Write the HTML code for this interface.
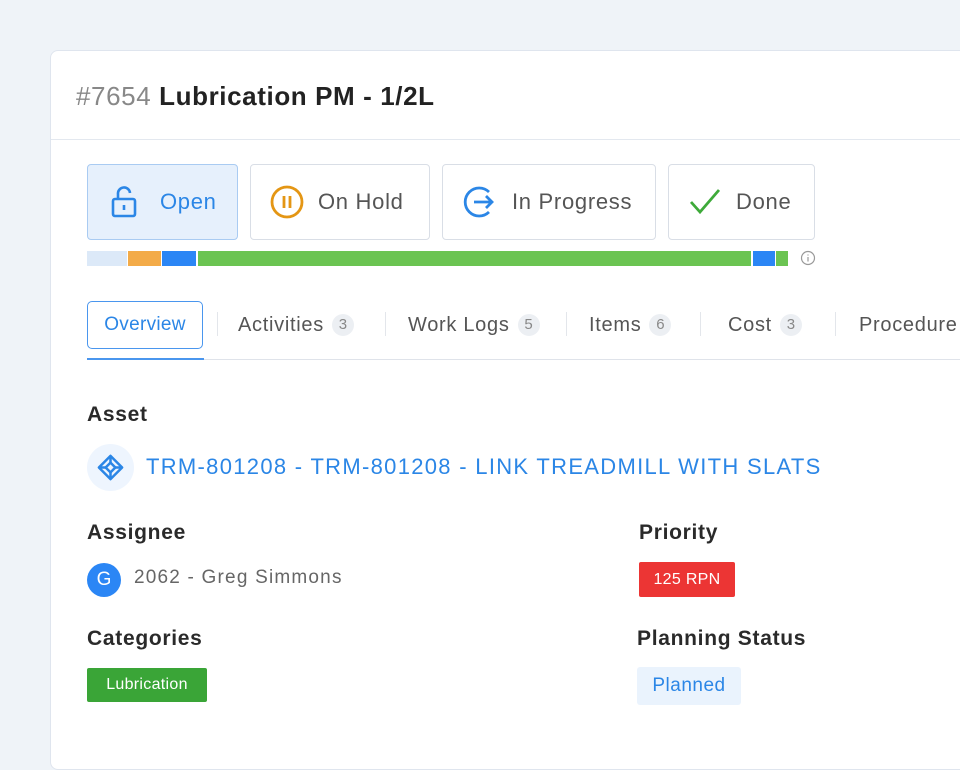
<!DOCTYPE html>
<html><head><meta charset="utf-8"><style>
*{box-sizing:border-box;margin:0;padding:0}
body{width:960px;height:720px;overflow:hidden;background:#eff3f8;font-family:"Liberation Sans",sans-serif;position:relative;letter-spacing:0.7px}
.card{position:absolute;left:50px;top:50px;width:960px;height:720px;background:#fff;border:1px solid #dfe5ee;border-radius:8px}
.hdr{height:89px;border-bottom:1px solid #e3e8ef;padding:30px 0 0 25px;font-size:26px;font-weight:bold;color:#222;letter-spacing:0.6px}
.hdr span{color:#888;font-weight:normal}
.btn{position:absolute;top:113px;height:76px;border:1px solid #d9dee6;border-radius:4px;background:#fff;display:flex;align-items:center;font-size:22px;color:#555}
.btn svg{margin:0 14px 0 19px}
.bar{position:absolute;top:200px;height:15px}
.tab{position:absolute;top:250px;height:48px;font-size:20px;color:#555;display:flex;align-items:center}
.cnt{display:inline-block;width:22px;height:22px;border-radius:11px;background:#eceff3;color:#888;font-size:15px;text-align:center;line-height:22px;margin-left:8px;letter-spacing:0}
.sep{position:absolute;top:261px;width:1px;height:24px;background:#e3e6eb}
.lbl{position:absolute;font-size:21px;font-weight:bold;color:#2a2a2a}
</style></head><body>
<div class="card">
<div class="hdr"><span>#7654</span> Lubrication PM - 1/2L</div>
<div class="btn" style="left:36px;width:151px;background:#e6f0fc;border-color:#a9cbf2;color:#2b86e6">
<svg style="margin:0 20px 0 22px" width="30" height="34" viewBox="0 0 30 34" fill="none" stroke="#2b86e6" stroke-width="2.6"><path d="M8 14V9a6 6 0 0 1 12-1"/><rect x="3" y="14" width="22" height="17" rx="2"/><path d="M14 20v5"/></svg>Open</div>
<div class="btn" style="left:199px;width:180px">
<svg width="34" height="34" viewBox="0 0 34 34" fill="none" stroke="#e49614" stroke-width="2.8"><circle cx="17" cy="17" r="15"/><path d="M14 11v12M20 11v12"/></svg>On Hold</div>
<div class="btn" style="left:391px;width:214px">
<svg width="36" height="34" viewBox="0 0 36 34" fill="none" stroke="#2b86e6" stroke-width="2.8"><path d="M27 7A14 14 0 1 0 27 27"/><path d="M12 17h18M24 11l6 6-6 6"/></svg>In Progress</div>
<div class="btn" style="left:617px;width:147px">
<svg width="34" height="30" viewBox="0 0 34 30" fill="none" stroke="#3eaa3a" stroke-width="2.8"><path d="M3 15l9 10L31 3"/></svg>Done</div>
<div class="bar" style="left:36px;width:40px;background:#dce9f8"></div>
<div class="bar" style="left:77px;width:33px;background:#f3ab48"></div>
<div class="bar" style="left:111px;width:34px;background:#2b86f5"></div>
<div class="bar" style="left:147px;width:553px;background:#6bc452"></div>
<div class="bar" style="left:702px;width:22px;background:#2b86f5"></div>
<div class="bar" style="left:725px;width:12px;background:#6bc452"></div>
<svg style="position:absolute;left:749px;top:199px" width="16" height="16" viewBox="0 0 16 16" fill="none" stroke="#999" stroke-width="1.2"><circle cx="8" cy="8" r="6.5"/><path d="M8 7v4.5M8 4.5v1"/></svg>
<div class="tab" style="left:36px;width:116px;border:1.5px solid #4a96ee;border-radius:5px;color:#2b86e6;justify-content:center;font-size:19px;letter-spacing:0.3px">Overview</div>
<div style="position:absolute;left:36px;top:308px;width:924px;height:1px;background:#dfe3ea"></div>
<div style="position:absolute;left:36px;top:307px;width:117px;height:2px;background:#4a96ee"></div>
<div class="sep" style="left:166px"></div>
<div class="tab" style="left:187px">Activities<span class="cnt">3</span></div>
<div class="sep" style="left:334px"></div>
<div class="tab" style="left:357px">Work Logs<span class="cnt">5</span></div>
<div class="sep" style="left:515px"></div>
<div class="tab" style="left:538px">Items<span class="cnt">6</span></div>
<div class="sep" style="left:649px"></div>
<div class="tab" style="left:677px">Cost<span class="cnt">3</span></div>
<div class="sep" style="left:784px"></div>
<div class="tab" style="left:808px">Procedure</div>
<div class="lbl" style="left:36px;top:352px">Asset</div>
<div style="position:absolute;left:36px;top:393px;width:47px;height:47px;border-radius:50%;background:#eef5fe"></div>
<svg style="position:absolute;left:44px;top:401px" width="31" height="31" viewBox="0 0 32 32" fill="none" stroke="#2b86e6" stroke-width="2.6" stroke-linejoin="round"><path d="M16 4L28 16 16 28 4 16z"/><path d="M16 11l5 5-5 5-5-5z"/><path d="M16 4v7M28 16h-7M16 28v-7M4 16h7"/></svg>
<div style="position:absolute;left:95px;top:403px;font-size:22px;color:#2b86e6;letter-spacing:1.3px">TRM-801208 - TRM-801208 - LINK TREADMILL WITH SLATS</div>
<div class="lbl" style="left:36px;top:470px">Assignee</div>
<div style="position:absolute;left:36px;top:512px;width:34px;height:34px;border-radius:50%;background:#2b86f5;color:#fff;font-size:19px;text-align:center;line-height:34px;letter-spacing:0">G</div>
<div style="position:absolute;left:83px;top:516px;font-size:19px;color:#666;letter-spacing:1.2px">2062 - Greg Simmons</div>
<div class="lbl" style="left:588px;top:470px">Priority</div>
<div style="position:absolute;left:588px;top:511px;width:96px;height:35px;background:#ec3534;border-radius:2px;color:#fff;font-size:16px;text-align:center;line-height:35px;letter-spacing:0.3px">125 RPN</div>
<div class="lbl" style="left:36px;top:576px">Categories</div>
<div style="position:absolute;left:36px;top:617px;width:120px;height:34px;background:#3aa537;border-radius:2px;color:#fff;font-size:16px;text-align:center;line-height:34px;letter-spacing:0.3px">Lubrication</div>
<div class="lbl" style="left:586px;top:576px">Planning Status</div>
<div style="position:absolute;left:586px;top:616px;width:104px;height:38px;background:#eaf3fd;border-radius:3px;color:#2b86e6;font-size:19px;text-align:center;line-height:38px;letter-spacing:0.5px">Planned</div>
</div>
</body></html>
